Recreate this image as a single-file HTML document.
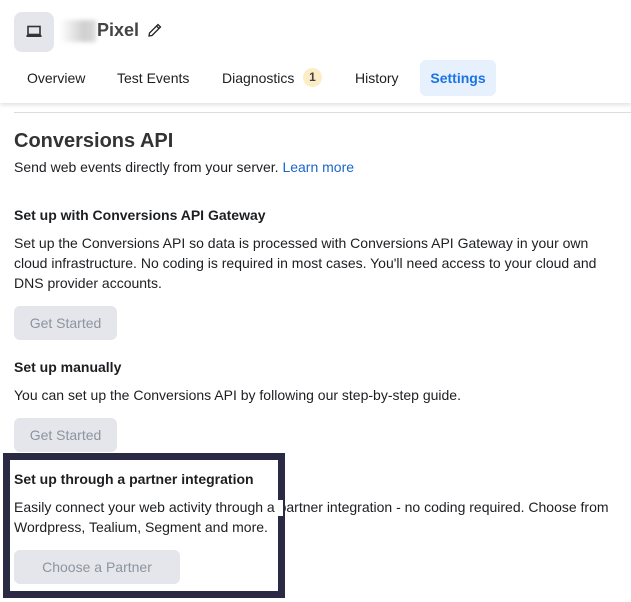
<!DOCTYPE html>
<html><head><style>
*{margin:0;padding:0;box-sizing:border-box}
body{width:631px;height:602px;background:#fff;font-family:"Liberation Sans",sans-serif;color:#1c1e21;position:relative;overflow:hidden}
.a{position:absolute;white-space:nowrap}
.t{font-size:14px;color:#1c1e21}
.h{font-size:14px;font-weight:bold}
.p{font-size:14px;line-height:20px}
.btn{position:absolute;background:#e4e6eb;border-radius:6px;color:#8d949e;font-size:14px;text-align:center;line-height:34px}
</style></head><body>
<div class="a" style="left:0;top:0;width:631px;height:103px;background:#fff;box-shadow:0 2px 4px rgba(0,0,0,.12)"></div>
<div class="a" style="left:14px;top:12px;width:40px;height:40px;background:#e4e6eb;border-radius:8px"></div>
<svg class="a" style="left:26px;top:25px" width="16" height="14" viewBox="0 0 16 14"><rect x="2" y="1.5" width="12" height="8" fill="none" stroke="#333" stroke-width="1.6"/><rect x="0.5" y="10" width="15" height="2" fill="#333"/></svg>
<div class="a" style="left:60px;top:20px;width:36px;height:22px;background:linear-gradient(90deg,#fff,#ddd,#bbb,#ccc);filter:blur(2px);opacity:.7"></div>
<div class="a" style="left:97px;top:20px;font-size:18px;font-weight:bold;color:#444">Pixel</div>
<svg class="a" style="left:146px;top:22px" width="17" height="17" viewBox="0 0 17 17"><path d="M3 14 L3.5 11 L12 2.5 L14.5 5 L6 13.5 Z M10.5 4 L13 6.5" fill="none" stroke="#222" stroke-width="1.3"/></svg>
<div class="a t" style="left:27px;top:70px">Overview</div>
<div class="a t" style="left:117px;top:70px">Test Events</div>
<div class="a t" style="left:222px;top:70px">Diagnostics</div>
<div class="a" style="left:303px;top:68px;width:19px;height:19px;border-radius:50%;background:#fcedc6;font-size:12px;font-weight:bold;text-align:center;line-height:19px;color:#444">1</div>
<div class="a t" style="left:355px;top:70px">History</div>
<div class="a" style="left:420px;top:60px;width:76px;height:36px;background:#e7f0fd;border-radius:6px;color:#1b74e4;font-weight:bold;font-size:14px;text-align:center;line-height:36px">Settings</div>
<div class="a" style="left:14px;top:112px;width:617px;height:1px;background:#dadde1"></div>
<div class="a" style="left:14px;top:130px;font-size:20px;font-weight:bold;color:#333">Conversions API</div>
<div class="a t" style="left:14px;top:159px">Send web events directly from your server. <span style="color:#1b66c9">Learn more</span></div>
<div class="a h" style="left:14px;top:207px">Set up with Conversions API Gateway</div>
<div class="a p" style="left:14px;top:233px">Set up the Conversions API so data is processed with Conversions API Gateway in your own<br>cloud infrastructure. No coding is required in most cases. You'll need access to your cloud and<br>DNS provider accounts.</div>
<div class="btn" style="left:14px;top:306px;width:103px">Get Started</div>
<div class="a h" style="left:14px;top:359px">Set up manually</div>
<div class="a p" style="left:14px;top:385px">You can set up the Conversions API by following our step-by-step guide.</div>
<div class="btn" style="left:14px;top:418px;width:103px">Get Started</div>
<div class="a p" style="left:14px;top:497px">Easily connect your web activity through a partner integration - no coding required. Choose from<br>Wordpress, Tealium, Segment and more.</div>
<div class="a" style="left:3px;top:453px;width:282px;height:145px;border:7px solid #2b2a45;background:transparent"></div>
<div class="a" style="left:276px;top:500px;width:7px;height:16px;background:#fff"></div>
<div class="a h" style="left:14px;top:471px">Set up through a partner integration</div>
<div class="btn" style="left:14px;top:550px;width:166px">Choose a Partner</div>
</body></html>
